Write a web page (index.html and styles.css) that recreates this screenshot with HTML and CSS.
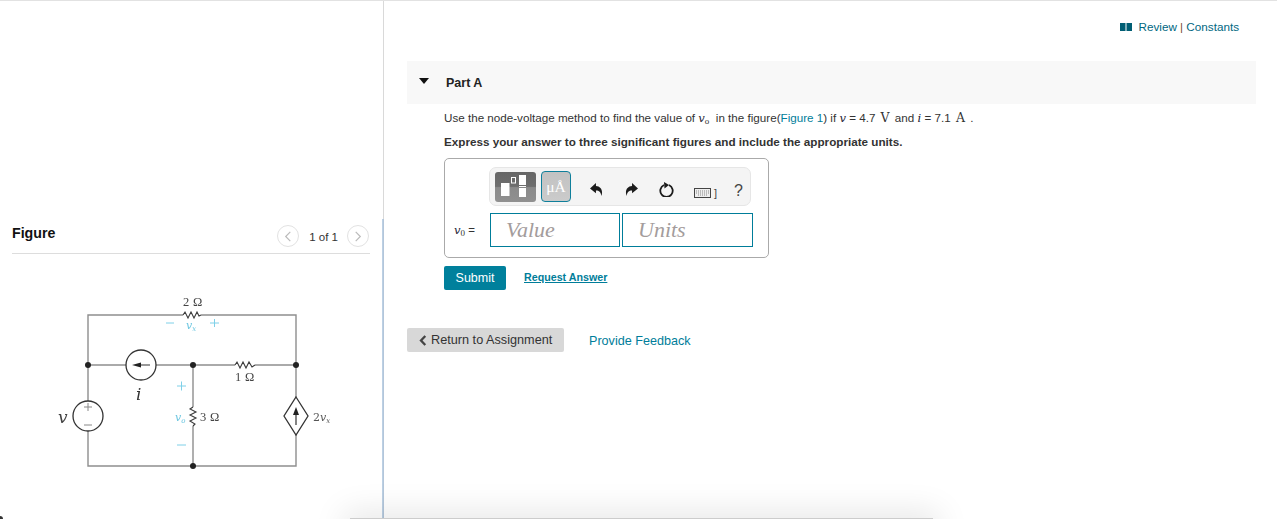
FILE: index.html
```html
<!DOCTYPE html>
<html lang="en">
<head>
<meta charset="utf-8">
<title>Part A</title>
<link rel="stylesheet" href="styles.css">
</head>
<body>
<div class="page">
  <aside class="figure-panel">
    <header class="figure-head">
      <h2 class="figure-title">Figure</h2>
      <div class="pager">
        <span class="pager-btn"><svg viewBox="0 0 8 12" class="pager-chev"><path d="M6.5 1 L1.5 6 L6.5 11"/></svg></span>
        <span class="pager-text">1 of 1</span>
        <span class="pager-btn"><svg viewBox="0 0 8 12" class="pager-chev"><path d="M1.5 1 L6.5 6 L1.5 11"/></svg></span>
      </div>
    </header>
    <svg class="circuit" viewBox="0 254 382 230" width="382" height="230">
      <g class="wire">
        <path d="M183 315 H88 V401 M88 431 V466 H296 V434 M296 397 V315 H201"/>
        <path d="M88 365 H126 M156 365 H235 M255 365 H296"/>
        <path d="M193 365 V407 M193 426 V466"/>
      </g>
      <g class="res">
        <path d="M183 315 L185 312 L188 318 L191 312 L194 318 L197 312 L199 316 L201 315"/>
        <path d="M235 365 L237 362 L240 368 L243 362 L246 368 L249 362 L252 367 L255 365"/>
        <path d="M193 407 L190 409 L196 412 L190 415 L196 418 L190 421 L195 424 L193 426"/>
      </g>
      <g class="sym">
        <circle cx="141" cy="365" r="15"/>
        <circle cx="88" cy="416" r="15"/>
        <path d="M296 397 L308 416 L296 435 L284 416 Z"/>
      </g>
      <path class="arrow-line" d="M139 365 H150 M296 413 V425"/>
      <path class="fill" d="M132 365 L141 362.500 V367.500 Z"/>
      <path class="fill" d="M296 407 L293 415 H299 Z"/>
      <g class="fill">
        <circle cx="88" cy="365" r="3"/>
        <circle cx="193" cy="365" r="3"/>
        <circle cx="296" cy="365" r="3"/>
        <circle cx="193" cy="466" r="3"/>
      </g>
      <g class="pol">
        <path d="M84 407 H92 M88 403 V411 M84 425 H92"/>
      </g>
      <g class="pol-blue">
        <path d="M166 323 H174 M210 323 H219 M214.500 319 V327"/>
        <path d="M177 386 H186 M181.500 381.500 V390.500"/>
        <path d="M177 445 H186"/>
      </g>
      <text class="ct" x="183" y="306">2 Ω</text>
      <text class="ct" x="235" y="381">1 Ω</text>
      <text class="ct" x="200" y="421">3 Ω</text>
      <text class="ct ct-i" x="136" y="400">i</text>
      <text class="ct ct-v" x="58" y="423">v</text>
      <text class="ct-b" x="186" y="329">v<tspan class="sub" dy="2">x</tspan></text>
      <text class="ct-b" x="175" y="421">v<tspan class="sub" dy="2">o</tspan></text>
      <text class="ct-2" x="313" y="421">2<tspan class="it">v</tspan><tspan class="sub it" dy="2">x</tspan></text>
    </svg>
  </aside>
  <div class="divider"></div>
  <main class="main">
    <div class="top-links">
      <svg class="book" viewBox="0 0 12 8"><path d="M0 0 H5.500 V8 H0 Z M6.500 0 H12 V8 H6.500 Z"/></svg>
      <span class="review">Review <span class="sep">|</span> Constants</span>
    </div>
    <div class="part-bar">
      <span class="caret"></span>
      <h3 class="part-title">Part A</h3>
    </div>
    <section class="question">
      <p class="q-line">Use the node-voltage method to find the value of <span class="m">v</span><span class="m-sub">o</span>&nbsp; in the figure(<span class="link">Figure 1</span>) if <span class="m">v</span> = 4.7 <span class="unit">V</span> and <span class="m">i</span> = 7.1 <span class="unit">A</span> .</p>
      <p class="q-bold">Express your answer to three significant figures and include the appropriate units.</p>
      <div class="answer">
        <div class="toolbar">
          <span class="tb-tpl">
            <svg viewBox="0 0 41 30" class="tpl-svg">
              <rect class="w" x="6" y="11" width="8.500" height="13"/>
              <rect class="o" x="16.500" y="5.500" width="4" height="5.500"/>
              <rect class="w" x="24" y="3" width="7" height="10"/>
              <rect class="w" x="24" y="14" width="7" height="1"/>
              <rect class="w" x="24" y="16" width="7" height="9"/>
            </svg>
          </span>
          <span class="tb-unit">μÅ</span>
          <svg class="tb-ic ic-undo" viewBox="0.500 0.500 12 12"><path d="M6 0.500 L0.500 5.500 L6 10 V7.500 C9 7.500 10.500 9 11 12.500 C12.800 7.500 10.500 3.500 6 3.300 Z"/></svg>
          <svg class="tb-ic ic-redo" viewBox="0.500 0.500 12 12"><path d="M7 0.500 L12.500 5.500 L7 10 V7.500 C4 7.500 2.500 9 2 12.500 C0.200 7.500 2.500 3.500 7 3.300 Z"/></svg>
          <svg class="tb-ic ic-reset" viewBox="0 0 15 15"><path class="rs" d="M10 3 A6.200 6.200 0 1 1 5 3"/><path d="M5 0 L10 3 L5.500 6.500 Z"/></svg>
          <svg class="ic-kb" viewBox="0 0 17 10"><rect x="0.500" y="0.500" width="16" height="9" class="kb-o"/><path class="kb-d" d="M2 3 H15 M2 5 H15 M4 7 H13"/></svg>
          <span class="kb-br">]</span>
          <span class="tb-help">?</span>
        </div>
        <div class="input-row">
          <span class="var"><span class="m">v</span><span class="m-sub">0</span> =</span>
          <input class="field f-value" type="text" placeholder="Value">
          <input class="field f-units" type="text" placeholder="Units">
        </div>
      </div>
      <div class="actions">
        <button class="submit" type="button">Submit</button>
        <a class="request" href="#">Request Answer</a>
      </div>
    </section>
    <div class="footer-row">
      <button class="return" type="button"><svg viewBox="0 0 8 12" class="ret-chev"><path d="M6.500 1 L1.800 6 L6.500 11"/></svg>Return to Assignment</button>
      <a class="feedback" href="#">Provide Feedback</a>
    </div>
  </main>
</div>
<div class="bottom-shadow"></div>
<div class="corner-mark"></div>
</body>
</html>
```
FILE: styles.css
```css
* { box-sizing: border-box; }
html, body { margin: 0; padding: 0; height: 100%; overflow: hidden; background: #fff; }
body { font-family: "Liberation Sans", Arial, sans-serif; color: #333; position: relative; }
.page { display: flex; height: 519px; border-top: 1px solid #e2e2e2; }

.figure-panel { width: 382px; flex: none; padding: 220px 12px 0 12px; }
.figure-head { display: flex; justify-content: space-between; height: 33px; border-bottom: 1px solid #ddd; }
.figure-title { margin: 0; font-size: 14.200px; line-height: 24px; font-weight: 700; color: #111; }
.pager { display: flex; align-items: center; height: 32px; margin-right: 1px; font-size: 11.500px; color: #333; }
.pager-btn { width: 22px; height: 22px; border: 1px solid #e2e2e2; border-radius: 50%; display: flex; align-items: center; justify-content: center; margin-top: -2px; }
.pager-chev { width: 8px; height: 11px; fill: none; stroke: #bbb; stroke-width: 1.300; }
.pager-text { margin: 0 9px 0 10px; line-height: 14px; }
.circuit { display: block; margin-left: -12px; filter: blur(0.35px); }

.wire { fill: none; stroke: #8e8e8e; stroke-width: 1.400; }
.res { fill: none; stroke: #3a3a3a; stroke-width: 1.100; }
.sym { fill: #fff; stroke: #333; stroke-width: 1.300; }
.arrow-line { fill: none; stroke: #333; stroke-width: 1.200; }
.fill { fill: #222; stroke: none; }
.pol { fill: none; stroke: #888; stroke-width: 1; }
.pol-blue { fill: none; stroke: #7fd0e8; stroke-width: 1; }
.ct { font-family: "Liberation Serif", serif; font-size: 12.500px; fill: #444; letter-spacing: 0.300px; }
.ct-i { font-family: "DejaVu Serif", serif; font-size: 17px; font-style: italic; fill: #333; }
.ct-v { font-family: "DejaVu Serif", serif; font-size: 17px; font-style: italic; fill: #444; }
.ct-b { font-family: "DejaVu Serif", serif; font-size: 11px; font-style: italic; fill: #6cc6e0; }
.ct-2 { font-family: "DejaVu Serif", serif; font-size: 11px; fill: #555; }
.it { font-style: italic; }
.sub { font-size: 7px; }

.divider { width: 2px; flex: none; background: linear-gradient(#fff 218px, #bcd0e4 218px) 0 0 / 1px 100% no-repeat, linear-gradient(#d9d9d9 218px, #b3c6da 218px) 1px 0 / 1px 100% no-repeat; }

.main { flex: 1; min-width: 0; padding: 0 21px 0 23px; }
.top-links { display: flex; justify-content: flex-end; align-items: center; height: 59px; padding: 0 17px 8px 0; font-size: 11.700px; color: #00677f; margin-bottom: 1px; }
.book { width: 12px; height: 8px; fill: #005e74; margin-right: 7px; }
.sep { color: #7a4a30; }
.part-bar { display: flex; align-items: center; height: 43px; background: #f8f8f8; padding-left: 12px; }
.caret { width: 0; height: 0; border-left: 5.500px solid transparent; border-right: 5.500px solid transparent; border-top: 6px solid #111; margin-top: -3px; }
.part-title { margin: 0 0 0 17px; font-size: 12.500px; font-weight: 700; color: #222; }

.question { padding: 6px 0 0 37px; }
.q-line { margin: 0; font-size: 11.650px; line-height: 16px; color: #333; white-space: nowrap; }
.q-bold { margin: 7px 0 0; font-size: 11.700px; line-height: 16px; font-weight: 700; color: #333; }
.m { font-family: "DejaVu Serif", serif; font-style: italic; font-size: 11.500px; color: #223; }
.m-sub { font-family: "Liberation Serif", serif; font-size: 9px; position: relative; top: 2px; }
.unit { font-family: "DejaVu Serif", serif; font-size: 12.500px; margin: 0 2px; }
.link { color: #007d9a; }

.answer { width: 325px; height: 100px; margin-top: 8px; border: 1px solid #aaa; border-radius: 5px; padding: 8px 15px 0 9px; }
.toolbar { display: flex; align-items: center; width: 262px; height: 39px; margin-left: 35px; background: #f4f4f4; border: 1px solid #e6e6e6; border-radius: 7px; padding-left: 5px; }
.tb-tpl { width: 41px; height: 30px; border-radius: 3px; background: linear-gradient(#666 0, #6e6e6e 48%, #8a8a8a 52%, #909090 100%); display: block; }
.tpl-svg { display: block; width: 41px; height: 30px; }
.tpl-svg .w { fill: #fff; }
.tpl-svg .o { fill: none; stroke: #fff; stroke-width: 1; }
.tb-unit { width: 30px; height: 31px; margin-left: 5px; border: 1px solid #0f7f9b; border-radius: 4px; background: linear-gradient(#c2c2c2, #cbcbcb); color: #fff; font-family: "Liberation Serif", serif; font-size: 15.500px; line-height: 30px; text-align: center; }
.tb-ic { fill: #1b1b1b; display: block; }
.ic-undo { width: 13px; height: 13px; margin-left: 19px; margin-top: 6px; }
.ic-redo { width: 13px; height: 13px; margin-left: 22px; margin-top: 6px; }
.ic-reset { width: 15px; height: 15px; margin-left: 21px; margin-top: 5px; }
.rs { fill: none; stroke: #1b1b1b; stroke-width: 1.800; }
.ic-kb { width: 17px; height: 10px; margin-left: 20px; margin-top: 12px; }
.kb-o { fill: #eee; stroke: #444; stroke-width: 1; }
.kb-d { fill: none; stroke: #888; stroke-width: 1; stroke-dasharray: 1 1; }
.kb-br { font-size: 11px; color: #444; margin-left: 3px; margin-top: 12px; }
.tb-help { font-size: 16px; color: #444; margin-left: 17px; margin-top: 8px; }

.input-row { display: flex; align-items: center; margin-top: 7px; }
.var { width: 36px; font-size: 11.500px; color: #333; white-space: nowrap; }
.field { height: 34px; border: 1px solid #007d9a; background: #fff; padding: 0 0 0 15px; font-family: "Liberation Serif", serif; font-style: italic; font-size: 22px; outline: none; }
.field::placeholder { color: #a39c9c; opacity: 1; }
.f-value { width: 130px; margin-right: 2px; }
.f-units { width: 131px; }

.actions { display: flex; align-items: center; margin-top: 8px; }
.submit { width: 62px; height: 24px; border: 0; border-radius: 2px; background: #00809c; color: #fff; font-family: "Liberation Sans", Arial, sans-serif; font-size: 12.500px; padding: 0; }
.request { margin-left: 18px; font-size: 10.700px; font-weight: 700; color: #007d9a; margin-top: -2px; }

.footer-row { display: flex; align-items: center; margin-top: 38px; }
.return { display: flex; align-items: center; width: 157px; height: 24px; border: 0; border-radius: 2px; background: #d8d8d8; color: #333; font-family: "Liberation Sans", Arial, sans-serif; font-size: 12.700px; padding: 0 0 0 12px; }
.ret-chev { width: 8px; height: 11px; fill: none; stroke: #444; stroke-width: 2.500; margin-right: 4px; }
.feedback { margin-left: 25px; font-size: 12.600px; color: #007d9a; text-decoration: none; margin-top: 1px; }

.bottom-shadow { position: absolute; left: 350px; top: 518px; width: 583px; height: 20px; background: #ccc; box-shadow: 0 0 32px 6px rgba(0,0,0,0.1); }
.corner-mark { position: absolute; left: 0; top: 516px; width: 3px; height: 3px; background: #333; border-top-right-radius: 3px; }
```
